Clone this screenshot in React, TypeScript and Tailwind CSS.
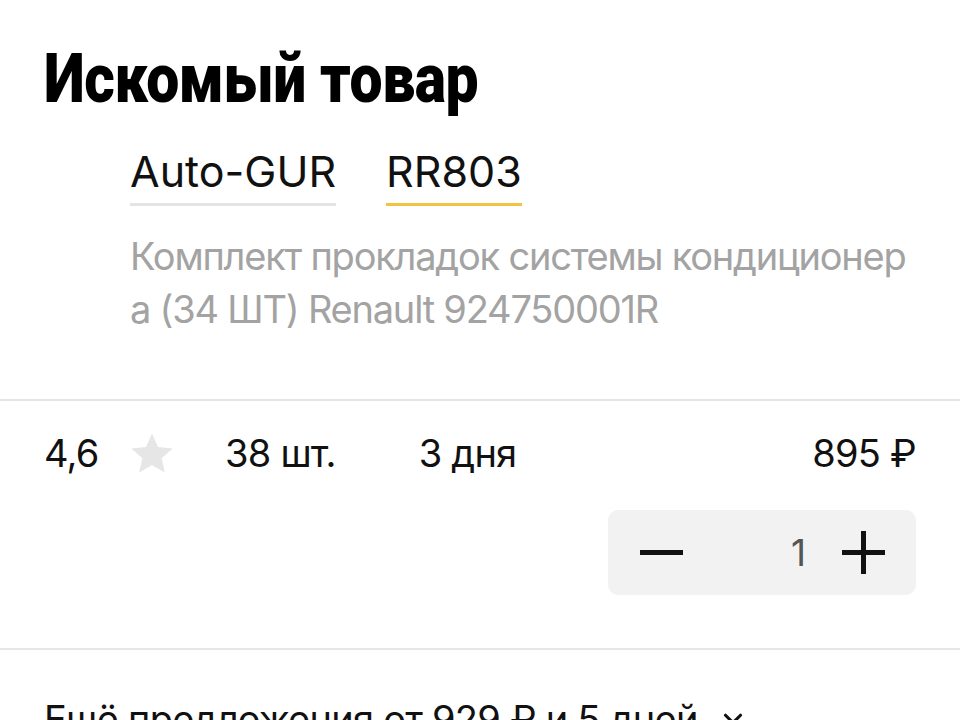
import React from "react";
import { ChevronDown } from "lucide-react";

const body = "font-['Inter','Roboto',sans-serif]";

const Tag: React.FC<{ label: string; active?: boolean }> = ({ label, active }) => (
  <div
    className={`pb-[6px] border-b-[3px] ${active ? "border-[#f2c341]" : "border-[#e4e4e4]"}`}
  >
    <span className="text-[43px] leading-[52px] text-[#111]">{label}</span>
  </div>
);

export default function App() {
  return (
    <div className={`w-[960px] h-[720px] overflow-hidden bg-white text-black ${body}`}>
      <div className="px-[44px] pt-[43px]">
        <h1 className="origin-left scale-x-[0.865] whitespace-nowrap font-['Roboto',sans-serif] font-black text-[68px] leading-[72px] tracking-[-0.5px]">
          Искомый товар
        </h1>
        <div className="pl-[86px] pt-[30px]">
          <div className="flex gap-[50px]">
            <Tag label="Auto-GUR" />
            <Tag label="RR803" active />
          </div>
          <p className="mt-[24px] break-all text-[38px] leading-[53px] tracking-[-0.032em] text-[#a3a3a3]">
            Комплект прокладок системы кондиционера (34 ШТ) Renault 924750001R
          </p>
        </div>
      </div>

      <div className="mt-[63px] h-[2px] bg-[#e6e6e6]" />

      <div className="px-[44px] pt-[29px]">
        <div className="flex items-center text-[38px] leading-[46px] tracking-[-0.02em] text-[#111]">
          <span className="w-[85px]">4,6</span>
          <svg viewBox="0 0 24 24" className="w-[46px] h-[46px]">
            <path
              d="M12 1.8l3.1 7.1 7.7.7-5.8 5.1 1.7 7.5L12 18.3l-6.7 3.9 1.7-7.5-5.8-5.1 7.7-.7z"
              fill="#e6e6e6"
            />
          </svg>
          <span className="ml-[50px]">38 шт.</span>
          <span className="ml-[83px]">3 дня</span>
          <span className="ml-auto">895 ₽</span>
        </div>
        <div className="flex justify-end mt-[34px]">
          <div className="w-[308px] h-[85px] rounded-[10px] bg-[#f2f2f2] flex items-center pl-[32px] pr-[31px]">
            <div className="w-[43px] h-[5px] bg-[#111]" />
            <span className="ml-auto mr-[36px] text-[37px] text-[#555]">1</span>
            <div className="relative w-[43px] h-[43px]">
              <div className="absolute left-0 right-0 top-[19px] h-[5px] bg-[#111]" />
              <div className="absolute top-0 bottom-0 left-[19px] w-[5px] bg-[#111]" />
            </div>
          </div>
        </div>
      </div>

      <div className="mt-[53px] h-[2px] bg-[#e6e6e6]" />

      <div className="px-[44px] pt-[46px] flex items-center gap-[20px] text-[38px] leading-[46px] tracking-[-0.02em] text-[#111]">
        <span>Ещё предложения от 929 ₽ и 5 дней</span>
        <ChevronDown className="w-[30px] h-[30px]" strokeWidth={2.5} />
      </div>
    </div>
  );
}
